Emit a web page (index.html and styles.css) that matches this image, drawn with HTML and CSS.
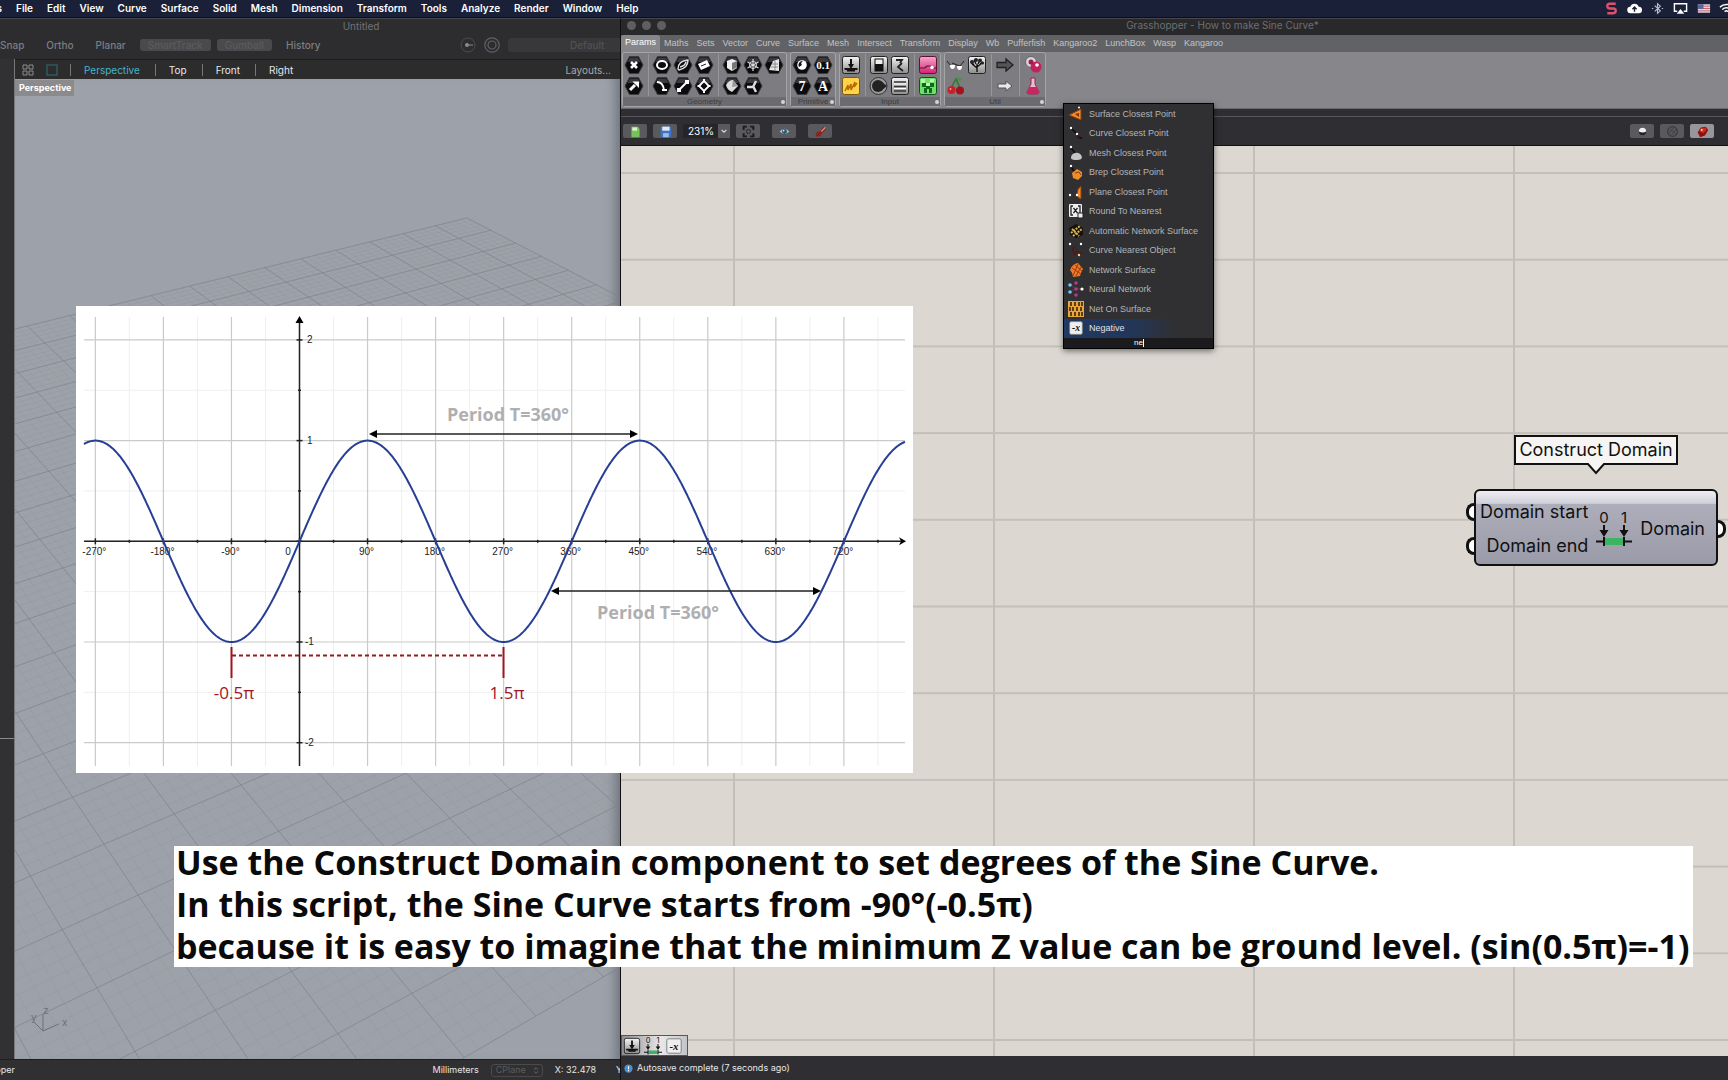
FILE: index.html
```html
<!DOCTYPE html>
<html lang="en">

<head>
    <meta charset="UTF-8">
    <meta name="viewport" content="width=device-width, initial-scale=1.0">
    <title>Grasshopper - How to make Sine Curve</title>
    <link rel="stylesheet" href="styles.css">
</head>

<body>
    <!-- shared shapes -->
    <svg class="defs" aria-hidden="true">
        <defs>
            <linearGradient id="steel" x1="0" y1="0" x2="0" y2="1">
                <stop offset="0" stop-color="#f4f4f4" />
                <stop offset="1" stop-color="#8c8c8c" />
            </linearGradient>
            <linearGradient id="pink" x1="0" y1="0" x2="0" y2="1">
                <stop offset="0" stop-color="#f7a9cb" />
                <stop offset="1" stop-color="#d81f72" />
            </linearGradient>
            <symbol id="hex" viewBox="0 0 20 20">
                <path d="M5.5 1.5h9L19 10l-4.500 8.500h-9L1 10z" fill="#0c0c0e" stroke="#3c3c40" />
                <path d="M6 2.500h8L16.500 7h-13z" fill="#3a3a3f" />
            </symbol>
            <symbol id="tile" viewBox="0 0 20 20">
                <rect x="1.500" y="1.500" width="17" height="17" rx="2" fill="url(#steel)" stroke="#222" />
            </symbol>
            <symbol id="slider" viewBox="0 0 20 20">
                <use href="#tile" />
                <path d="M10 4v7M3.500 14h13M6 15.500h8" stroke="#111" stroke-width="2" />
                <path d="M7 9h6l-3 5z" fill="#111" />
            </symbol>
            <symbol id="domain" viewBox="0 0 36 36">
                <rect x="9" y="27" width="18" height="7" fill="#3cb464" />
                <path d="M0 30.500h8M28 30.500h8M8 26v9M28 26v9M8 14v6M28 14v6" stroke="#111" stroke-width="2" />
                <path d="M3.500 19h9L8 26zM23.500 19h9L28 26z" fill="#111" />
                <text x="8" y="12" class="domain__digit">0</text>
                <text x="28" y="12" class="domain__digit">1</text>
            </symbol>
            <symbol id="negative" viewBox="0 0 20 20">
                <rect x="2" y="2" width="16" height="16" rx="2" fill="#eee" stroke="#777" />
                <text x="10" y="14" class="glyph glyph--minus-x">-x</text>
            </symbol>
        </defs>
    </svg>

    <header class="menubar">
        <nav class="menubar__menus">
            <span class="menubar__app">Rhinoceros</span>
            <a href="#">File</a><a href="#">Edit</a><a href="#">View</a><a href="#">Curve</a><a href="#">Surface</a><a href="#">Solid</a><a href="#">Mesh</a><a href="#">Dimension</a><a href="#">Transform</a><a href="#">Tools</a><a href="#">Analyze</a><a href="#">Render</a><a href="#">Window</a><a href="#">Help</a>
        </nav>
        <div class="menubar__extras">
            <svg viewBox="0 0 16 16"><path d="M12.500 3H6Q3.500 3 3.500 5.200T6 8h4q2.500 0 2.500 2.500T10 13H3.500" fill="none" stroke="#e0506a" stroke-width="2.600" /></svg>
            <svg viewBox="0 0 16 16"><path d="M4 13a3.500 3.500 0 0 1-.5-7A4.800 4.800 0 0 1 12.500 6a3.500 3.500 0 0 1 0 7z" fill="#fff" /><path d="M8 11.500V7M5.800 8.800L8 6.500l2.200 2.300" fill="none" stroke="#1a2037" stroke-width="1.500" /></svg>
            <svg viewBox="0 0 16 16"><path d="M5 5l6 5.500L8 13V3l3 2.500L5 11M2 8h1.500M12.500 8H14" fill="none" stroke="#b9bfd0" stroke-width="1.200" /></svg>
            <svg viewBox="0 0 16 16"><path d="M4.500 11H1.500V3h13v8h-3" fill="none" stroke="#fff" stroke-width="1.500" /><path d="M8 8.500l4 5H4z" fill="#fff" /></svg>
            <svg viewBox="0 0 16 16"><rect x="2" y="3.500" width="13" height="9" fill="#e9d4da" /><path d="M2 5.500h13M2 8h13M2 10.500h13" stroke="#c2606f" /><rect x="2" y="3.500" width="6" height="5" fill="#5a6798" /></svg>
            <svg viewBox="0 0 16 16"><path d="M1 6.500a10 10 0 0 1 14 0M3.500 9a6.500 6.500 0 0 1 9 0M6 11.300a3 3 0 0 1 4 0" fill="none" stroke="#fff" stroke-width="1.600" /></svg>
        </div>
    </header>

    <main class="desktop">
        <!-- Rhino window -->
        <section class="rhino">
            <div class="rhino__title">Untitled</div>
            <div class="rhino__tools">
                <button class="rhino__tool">Snap</button>
                <button class="rhino__tool">Ortho</button>
                <button class="rhino__tool">Planar</button>
                <button class="rhino__tool rhino__tool--on">SmartTrack</button>
                <button class="rhino__tool rhino__tool--on">Gumball</button>
                <button class="rhino__tool">History</button>
                <div class="rhino__layer">
                    <svg viewBox="0 0 16 16"><circle cx="8" cy="8" r="7" fill="none" stroke="#4c4c50" /><circle cx="7" cy="8" r="2" fill="#8a8a8e" /><path d="M8 8h5" stroke="#8a8a8e" /></svg>
                    <svg viewBox="0 0 16 16"><circle cx="8" cy="8" r="7.200" fill="none" stroke="#626266" stroke-width="1.200" /><circle cx="8" cy="8" r="4" fill="none" stroke="#626266" stroke-width="1.200" /></svg>
                    <select class="rhino__select" aria-label="Layer"><option>Default</option></select>
                </div>
            </div>
            <div class="rhino__body">
                <aside class="rhino__side"><div class="rhino__side-top"></div></aside>
                <div class="rhino__main">
                    <nav class="views">
                        <svg class="views__icon" viewBox="0 0 12 12"><path d="M1 1h4v4H1zM7 1h4v4H7zM1 7h4v4H1zM7 7h4v4H7z" fill="none" stroke="#8c8c90" /></svg>
                        <svg class="views__icon" viewBox="0 0 12 12"><rect x="1" y="1" width="10" height="10" fill="none" stroke="#2f6f7c" /></svg>
                        <a href="#" class="views__tab views__tab--active">Perspective</a>
                        <a href="#" class="views__tab">Top</a>
                        <a href="#" class="views__tab">Front</a>
                        <a href="#" class="views__tab">Right</a>
                        <a href="#" class="views__layouts">Layouts...</a>
                    </nav>
                    <div class="viewport">
                        <svg class="viewport__plane" id="plane"></svg>
                        <span class="viewport__name">Perspective</span>
                        <svg class="viewport__axes" viewBox="0 0 40 34">
                            <path d="M14 9v17l16-7M14 26L5 17" fill="none" stroke="#6c7078" />
                            <text x="14" y="9">z</text><text x="33" y="21">x</text><text x="2" y="16">y</text>
                        </svg>
                    </div>
                </div>
            </div>
            <footer class="rhino__status">
                <span class="rhino__clip">Grasshopper</span>
                <span class="rhino__units">Millimeters</span>
                <label class="rhino__cplane">
                    <select aria-label="Coordinates"><option>CPlane</option></select>
                    <svg viewBox="0 0 8 12"><path d="M2 5l2-2 2 2M2 7l2 2 2-2" fill="none" stroke="#6c6c70" /></svg>
                </label>
                <span>X: 32.478</span>
                <span class="rhino__y">Y</span>
            </footer>
        </section>

        <!-- Grasshopper window -->
        <section class="gh">
            <div class="gh__title">
                <div class="gh__lights"><i></i><i></i><i></i></div>
                Grasshopper - How to make Sine Curve*
            </div>
            <nav class="gh__tabs">
                <a href="#" class="gh__tab gh__tab--active">Params</a><a href="#" class="gh__tab">Maths</a><a href="#" class="gh__tab">Sets</a><a href="#" class="gh__tab">Vector</a><a href="#" class="gh__tab">Curve</a><a href="#" class="gh__tab">Surface</a><a href="#" class="gh__tab">Mesh</a><a href="#" class="gh__tab">Intersect</a><a href="#" class="gh__tab">Transform</a><a href="#" class="gh__tab">Display</a><a href="#" class="gh__tab">Wb</a><a href="#" class="gh__tab">Pufferfish</a><a href="#" class="gh__tab">Kangaroo2</a><a href="#" class="gh__tab">LunchBox</a><a href="#" class="gh__tab">Wasp</a><a href="#" class="gh__tab">Kangaroo</a>
            </nav>
            <div class="ribbon">
                <div class="ribbon__group">
                    <div class="ribbon__sets">
                        <div class="ribbon__set">
                            <button aria-label="Point"><svg viewBox="0 0 20 20"><use href="#hex" /><path d="M7 7l6 6M13 7l-6 6" stroke="#fff" stroke-width="2.600" /></svg></button>
                            <button aria-label="Vector"><svg viewBox="0 0 20 20"><use href="#hex" /><path d="M6 14l5-5" stroke="#fff" stroke-width="3" /><path d="M8.500 5.500H15v6.500z" fill="#fff" /></svg></button>
                        </div>
                        <div class="ribbon__set">
                            <button aria-label="Circle"><svg viewBox="0 0 20 20"><use href="#hex" /><ellipse cx="10" cy="10" rx="5" ry="4" fill="none" stroke="#fff" stroke-width="2" /></svg></button>
                            <button aria-label="Circular Arc"><svg viewBox="0 0 20 20"><use href="#hex" /><path d="M5 6q6 0 7 8M10 14h5" fill="none" stroke="#fff" stroke-width="1.800" /></svg></button>
                            <button aria-label="Curve"><svg viewBox="0 0 20 20"><use href="#hex" /><path d="M5 14q0-8 10-9 0 8-9 10zM7 12q5-1 6-5" fill="none" stroke="#ddd" stroke-width="1.400" /></svg></button>
                            <button aria-label="Line"><svg viewBox="0 0 20 20"><use href="#hex" /><path d="M6 14l8-8" stroke="#fff" stroke-width="2" /><path d="M4 12h4v4H4zM12 4h4v4h-4z" fill="#fff" /></svg></button>
                            <button aria-label="Plane"><svg viewBox="0 0 20 20"><use href="#hex" /><path d="M4 9l9-4 3 6-9 4z" fill="#fff" /><path d="M7 11l5-2" stroke="#222" /></svg></button>
                            <button aria-label="Rectangle"><svg viewBox="0 0 20 20"><use href="#hex" /><path d="M5 10l5-5 5 5-5 5z" fill="none" stroke="#fff" stroke-width="1.800" /><path d="M10 3v3M10 14v3M3.500 10h3M13.500 10h3" stroke="#fff" stroke-width="2" /></svg></button>
                        </div>
                        <div class="ribbon__set">
                            <button aria-label="Box"><svg viewBox="0 0 20 20"><use href="#hex" /><path d="M5 6l5-2 5 2v7l-5 3-5-3z" fill="#eee" /><path d="M10 8v7l5-2.500V6z" fill="#777" /></svg></button>
                            <button aria-label="Brep"><svg viewBox="0 0 20 20"><use href="#hex" /><path d="M4 9q3-5 7-5l5 6-6 6q-5-2-6-7z" fill="#ddd" /><path d="M11 4l5 6-6 1z" fill="#999" /></svg></button>
                            <button aria-label="Mesh"><svg viewBox="0 0 20 20"><use href="#hex" /><path d="M10 4v12M4.500 7l11 6M4.500 13l11-6" stroke="#ddd" stroke-width="1.200" /><circle cx="10" cy="10" r="3.500" fill="none" stroke="#ddd" /></svg></button>
                            <button aria-label="Geometry"><svg viewBox="0 0 20 20"><use href="#hex" /><path d="M4 11h6l3-6M10 10l3 6" fill="none" stroke="#ddd" stroke-width="2.400" /></svg></button>
                            <button aria-label="Surface"><svg viewBox="0 0 20 20"><use href="#hex" /><path d="M5 15l4-9 6-2v12z" fill="#e6e6e6" /><path d="M11 6v9M8 9h6M7 12h7" stroke="#777" stroke-width=".8" /></svg></button>
                        </div>
                    </div>
                    <div class="ribbon__label">Geometry</div>
                </div>
                <div class="ribbon__group">
                    <div class="ribbon__sets">
                        <div class="ribbon__set">
                            <button aria-label="Boolean"><svg viewBox="0 0 20 20"><use href="#hex" /><circle cx="10" cy="10" r="4.800" fill="#fff" /><path d="M7 12a4 4 0 0 1 4-6q-3 2-1 4z" fill="#111" /></svg></button>
                            <button aria-label="Integer"><svg viewBox="0 0 20 20"><use href="#hex" /><text x="10" y="15" class="glyph">7</text></svg></button>
                            <button aria-label="Number"><svg viewBox="0 0 20 20"><use href="#hex" /><text x="10" y="14" class="glyph glyph--small">0.1</text></svg></button>
                            <button aria-label="Text"><svg viewBox="0 0 20 20"><use href="#hex" /><text x="10" y="15" class="glyph">A</text></svg></button>
                        </div>
                    </div>
                    <div class="ribbon__label">Primitive</div>
                </div>
                <div class="ribbon__group">
                    <div class="ribbon__sets">
                        <div class="ribbon__set">
                            <button aria-label="Number Slider"><svg viewBox="0 0 20 20"><use href="#slider" /></svg></button>
                            <button aria-label="Panel"><svg viewBox="0 0 20 20"><rect x="1.500" y="1.500" width="17" height="17" rx="2" fill="#ffd24a" stroke="#7a5a10" /><path d="M4 15l3-6v5l3-6v6l4-8-1 5 3-4" fill="none" stroke="#b56a00" stroke-width="1.500" /></svg></button>
                        </div>
                        <div class="ribbon__set">
                            <button aria-label="Boolean Toggle"><svg viewBox="0 0 20 20"><use href="#tile" /><rect x="6" y="4" width="8" height="12" fill="#eee" stroke="#111" /><path d="M6 9h8v7H6z" fill="#111" /></svg></button>
                            <button aria-label="Control Knob"><svg viewBox="0 0 20 20"><circle cx="9.500" cy="10" r="8.500" fill="#999" stroke="#333" /><circle cx="9" cy="10" r="6" fill="#222" /><path d="M13 6l5 4-5 4z" fill="#222" /></svg></button>
                            <button aria-label="Graph Mapper"><svg viewBox="0 0 20 20"><use href="#tile" /><path d="M6 5h6l-2 3M12 8l-4 4 5 4" fill="none" stroke="#222" stroke-width="1.800" /></svg></button>
                            <button aria-label="Value List"><svg viewBox="0 0 20 20"><use href="#tile" /><path d="M4 6h12M4 10.500h12M4 15h12" stroke="#333" stroke-width="1.400" /><path d="M4 8h12M4 12.500h12" stroke="#fff" /></svg></button>
                        </div>
                        <div class="ribbon__set">
                            <button aria-label="Gradient"><svg viewBox="0 0 20 20"><rect x="1.500" y="1.500" width="17" height="17" rx="2" fill="url(#pink)" stroke="#5c1234" /><path d="M2 13h5l2-2h3l2 2h4" fill="none" stroke="#5c1234" stroke-width="1.200" /><circle cx="14" cy="12.500" r="1.800" fill="#fff" /></svg></button>
                            <button aria-label="Image Sampler"><svg viewBox="0 0 20 20"><rect x="1.500" y="1.500" width="17" height="17" rx="2" fill="#6fe06a" stroke="#15501a" /><path d="M3 3h4v4H3zM12 3h4v3h-4zM8 7h4v4H8z" fill="#b8f5a8" /><path d="M4 7h4v4H4zM12 7h4v4h-4zM8 10h4v3H8zM6 12h3v5H6zM11 12h3v5h-3z" fill="#0f6a1c" /></svg></button>
                        </div>
                    </div>
                    <div class="ribbon__label">Input</div>
                </div>
                <div class="ribbon__group">
                    <div class="ribbon__sets">
                        <div class="ribbon__set">
                            <button aria-label="Fitness"><svg viewBox="0 0 20 20"><path d="M1 6l4 5M6 8l8 3M14 11l4-5" stroke="#222" fill="none" /><path d="M4 10h5q0 4-2.500 4T4 10zM11 11h5q0 4-2.500 4T11 11z" fill="#fff" /></svg></button>
                            <button aria-label="Cherry Picker"><svg viewBox="0 0 20 20"><path d="M5 12L10 3l4 9" fill="none" stroke="#2d7a2d" stroke-width="1.500" /><path d="M10 3q4-3 6 1-3 2-6-1z" fill="#3f9a3c" /><circle cx="5.500" cy="14" r="4" fill="#c3222a" /><circle cx="14" cy="14.500" r="4" fill="#a5121d" /><circle cx="4.500" cy="13" r="1" fill="#ff9a94" /></svg></button>
                            <button aria-label="Param Viewer"><svg viewBox="0 0 20 20"><use href="#tile" /><path d="M10 17V9M10 13L5 9M10 12l5-4M4 7l3 3M16 7l-3 2M7 5l2 4M13 5l-2 4" stroke="#111" stroke-width="1.400" /><circle cx="5" cy="7" r="2" fill="#222" /><circle cx="9" cy="5" r="2" fill="#222" /><circle cx="13" cy="5.500" r="2" fill="#222" /><circle cx="15.500" cy="8" r="1.600" fill="#222" /></svg></button>
                        </div>
                        <div class="ribbon__set">
                            <button aria-label="Data Input"><svg viewBox="0 0 20 20"><path d="M2 7.500h9V4l7 6-7 6v-3.500H2z" fill="#555" stroke="#222" stroke-width="1.300" /></svg></button>
                            <button aria-label="Data Output"><svg viewBox="0 0 20 20"><path d="M3 8h8V5l6 5-6 5v-3H3z" fill="#e8e8e8" stroke="#555" /></svg></button>
                        </div>
                        <div class="ribbon__set">
                            <button aria-label="Cluster"><svg viewBox="0 0 20 20"><circle cx="8" cy="7" r="5.500" fill="#d9d3d6" stroke="#666" /><circle cx="13" cy="12" r="5.500" fill="#c2205f" /><circle cx="8" cy="7" r="2.500" fill="#a01c4c" /><circle cx="14" cy="10" r="1.800" fill="#fff" /></svg></button>
                            <button aria-label="Galapagos"><svg viewBox="0 0 20 20"><path d="M8 2h4v6l4 8q0 2-2 2H6q-2 0-2-2l4-8z" fill="#f2b9cd" stroke="#8e2a50" /><path d="M7 11h6l3 5q0 2-2 2H6q-2 0-2-2z" fill="#cc2361" /></svg></button>
                        </div>
                    </div>
                    <div class="ribbon__label">Util</div>
                </div>
            </div>
            <div class="gh__bar">
                <button class="gh__btn" aria-label="New"><svg viewBox="0 0 16 16"><path d="M3 2h8l2 3v10H3z" fill="#77c25a" /><path d="M4 3h6v4H4z" fill="#d9f2c8" /></svg></button>
                <button class="gh__btn" aria-label="Save"><svg viewBox="0 0 16 16"><rect x="2" y="2" width="13" height="13" rx="1" fill="#3f74c4" /><path d="M4 2h9v5H4z" fill="#dfe9f6" /><path d="M5 10h7v5H5z" fill="#9dbde8" /></svg></button>
                <label class="gh__zoom"><select aria-label="Zoom"><option>231%</option></select><svg viewBox="0 0 10 10"><path d="M3 4l2 2 2-2" fill="none" stroke="#ddd" /></svg></label>
                <button class="gh__btn" aria-label="Zoom extents"><svg viewBox="0 0 16 16"><path d="M2 6V2h4M10 2h4v4M14 10v4h-4M6 14H2v-4" fill="none" stroke="#1b1b1d" stroke-width="2.400" /><circle cx="8" cy="8" r="2.500" fill="none" stroke="#1b1b1d" /></svg></button>
                <button class="gh__btn gh__btn--apart" aria-label="Named views"><svg viewBox="0 0 16 16"><path d="M2 8q6-7 12 0-6 6-12 0z" fill="#a9c4cf" /><circle cx="8" cy="8" r="3" fill="#1f5a76" /><circle cx="7" cy="7" r="1" fill="#fff" /></svg></button>
                <button class="gh__btn gh__btn--apart" aria-label="Sketch"><svg viewBox="0 0 16 16"><path d="M2 14q0-7 5-6l5-6 3 3-6 6q0 4-7 3z" fill="#8e2222" /><path d="M9 8l5-5" stroke="#e09a90" stroke-width="1.500" /></svg></button>
                <div class="gh__preview">
                    <button class="gh__btn" aria-label="No preview"><svg viewBox="0 0 16 16"><circle cx="8" cy="8" r="4.500" fill="#222" /><path d="M3.500 8a4.500 4.500 0 0 1 9 0q-4 2.500-9 0z" fill="#eee" /></svg></button>
                    <button class="gh__btn" aria-label="Wireframe preview"><svg viewBox="0 0 16 16"><circle cx="8" cy="8" r="6" fill="none" stroke="#3a3a3c" stroke-width="1.400" /><path d="M3 11l7-8M6 13l7-8M5 5l7 6" stroke="#3a3a3c" /></svg></button>
                    <button class="gh__btn gh__btn--on" aria-label="Shaded preview"><svg viewBox="0 0 16 16"><path d="M2 9l4-6 6-1 3 4-4 7-6 2z" fill="#8e0f0c" /><path d="M4 8l3-4 5-1 1 3-4 4z" fill="#cf2a1e" /><circle cx="7" cy="6" r="1.300" fill="#ffc7bb" /></svg></button>
                </div>
            </div>
            <div class="canvas">
                <svg class="canvas__grid" aria-hidden="true">
                    <pattern id="cells" x="112" y="26" width="260" height="86.700" patternUnits="userSpaceOnUse">
                        <path d="M1 0v87M0 1h260" stroke="#c4bfb9" stroke-width="2" fill="none" />
                    </pattern>
                    <rect width="100%" height="100%" fill="url(#cells)" />
                </svg>
                <div class="node">
                    <div class="node__tag">Construct Domain
                        <svg viewBox="0 0 18 12"><path d="M0 0h18L9 10z" fill="#f6f5f3" /><path d="M0 1h1l8 9 8-9h1" fill="none" stroke="#111" stroke-width="2" /></svg>
                    </div>
                    <div class="node__box">
                        <div class="node__inputs"><span>Domain start</span><span>Domain end</span></div>
                        <svg class="node__icon" viewBox="0 0 36 36"><use href="#domain" /></svg>
                        <div class="node__output">Domain</div>
                    </div>
                </div>
                <div class="recent">
                    <svg viewBox="0 0 20 20"><use href="#slider" /></svg>
                    <svg viewBox="0 0 36 36"><use href="#domain" /></svg>
                    <svg viewBox="0 0 20 20"><use href="#negative" /></svg>
                </div>
            </div>
            <footer class="gh__status">
                <svg viewBox="0 0 12 12"><circle cx="6" cy="6" r="5.500" fill="#4a90d0" /><path d="M6 3v4M6 8v1.500" stroke="#fff" stroke-width="1.500" /></svg>
                Autosave complete (7 seconds ago)
            </footer>
        </section>

        <div class="search">
            <ul class="search__list">
                <li><svg viewBox="0 0 16 16"><path d="M1 9l12-6v11z" fill="#f08a2c" stroke="#8a3c08" /><path d="M7 8l4-1v4z" fill="#7c3206" /><circle cx="11" cy="1.500" r="1" fill="#fff" /></svg>Surface Closest Point</li>
                <li><svg viewBox="0 0 16 16"><path d="M3 3l6 6q0 4 5 4" fill="none" stroke="#0c0c0c" stroke-width="1.500" /><circle cx="3" cy="3" r="1.200" fill="#fff" /><circle cx="9" cy="9" r="1.200" fill="#fff" /><circle cx="10" cy="12" r="1.500" fill="#4a1212" /></svg>Curve Closest Point</li>
                <li><svg viewBox="0 0 16 16"><path d="M3 3l4 5" stroke="#0c0c0c" stroke-width="1.500" /><circle cx="3" cy="2" r="1.200" fill="#fff" /><path d="M3 13q0-4 4-5 5-1 7 4 0 3-5 3-6 0-6-2z" fill="#c4c4c4" /></svg>Mesh Closest Point</li>
                <li><svg viewBox="0 0 16 16"><path d="M3 3l4 5" stroke="#0c0c0c" stroke-width="1.500" /><circle cx="3" cy="2" r="1.200" fill="#fff" /><path d="M4 9l5-4 5 3v4l-4 4-5-2z" fill="#ee8b2a" /><path d="M7 9l4-1 2 3" fill="none" stroke="#8a430a" /></svg>Brep Closest Point</li>
                <li><svg viewBox="0 0 16 16"><path d="M9 10q0-5 4-8v13q-4-1-4-5z" fill="#f08a2c" stroke="#8a3c08" /><circle cx="2" cy="11" r="1.200" fill="#fff" /><circle cx="9" cy="11" r="1.200" fill="#fff" /></svg>Plane Closest Point</li>
                <li><svg viewBox="0 0 16 16"><rect x="1" y="1" width="13" height="13" rx="1" fill="#eee" /><path d="M5 3H3v9h2M10 3h2v9h-2M5.500 5l4 5M9.500 5l-4 5" fill="none" stroke="#222" stroke-width="1.300" /><rect x="10" y="10" width="5" height="5" fill="#eee" stroke="#222" /></svg>Round To Nearest</li>
                <li><svg viewBox="0 0 16 16"><path d="M1 5l7-4 7 4v7l-7 3-6-3z" fill="#17130c" /><path d="M3 10l9-7M5 13l9-7M4 6l7 7" stroke="#d8b25c" stroke-width="2" stroke-dasharray="2 1" /></svg>Automatic Network Surface</li>
                <li><svg viewBox="0 0 16 16"><path d="M6 5q-3 4 2 8M8 9l5 3" fill="none" stroke="#5a1018" stroke-width="1.600" /><circle cx="2" cy="2" r="1.200" fill="#fff" /><circle cx="13" cy="2" r="1.200" fill="#fff" /><circle cx="11" cy="13" r="1.200" fill="#e8d890" /></svg>Curve Nearest Object</li>
                <li><svg viewBox="0 0 16 16"><path d="M2 8q2-6 8-7l5 6q-2 3-3 7l-7 1q0-4-3-7z" fill="#ee7a2a" /><path d="M4 6l9 6M7 3l7 6M10 2l-5 12M13 5l-5 9" stroke="#8e2c08" stroke-width=".8" /></svg>Network Surface</li>
                <li><svg viewBox="0 0 16 16"><path d="M3 4l4 3M3 11l4-3M9 8h4" stroke="#703050" /><circle cx="2" cy="4" r="1.800" fill="#6fc7f0" /><circle cx="2" cy="11" r="1.800" fill="#6fc7f0" /><circle cx="8" cy="2" r="1.800" fill="#b03a88" /><circle cx="8" cy="8" r="1.800" fill="#b03a88" /><circle cx="8" cy="14" r="1.800" fill="#b03a88" /><circle cx="14" cy="8" r="1.600" fill="#fff" /></svg>Neural Network</li>
                <li><svg viewBox="0 0 16 16"><rect width="16" height="16" fill="#e8a63c" /><path d="M3 1v4M7 1v4M11 1v4M14 1v4M2 6v4M5 6v4M9 6v4M13 6v4M3 11v4M7 11v4M11 11v4M14 11v4" stroke="#3c2404" stroke-width="1.600" /></svg>Net On Surface</li>
                <li class="search__item--active"><svg viewBox="0 0 20 20"><use href="#negative" /></svg>Negative</li>
            </ul>
            <div class="search__field">
                <input class="search__input" type="text" value="ne" aria-label="Search components">
            </div>
        </div>

        <figure class="chart">
            <svg id="chart" viewBox="0 0 837 467" role="img" aria-label="Sine curve"></svg>
        </figure>

        <div class="caption">
            <p class="caption__text">
                Use the Construct Domain component to set degrees of the Sine Curve.<br>
                In this script, the Sine Curve starts from -90°(-0.5π)<br>
                because it is easy to imagine that the minimum Z value can be ground level. (sin(0.5π)=-1)
            </p>
        </div>
    </main>

    <script src="script.js"></script>
</body>

</html>
```
FILE: styles.css
```css
*,
*::after,
*::before {
    padding: 0;
    margin: 0;
    box-sizing: border-box;
}

html,
body {
    height: 100%;
}

body {
    display: flex;
    flex-direction: column;
    overflow: hidden;
    background: #2e2e31;
    color: #e6e6e8;
    font: 10px/12px Inter, "Liberation Sans", sans-serif;
}

a {
    color: inherit;
    text-decoration: none;
}

button,
select,
input {
    border: 0;
    background: none;
    color: inherit;
    font: inherit;
    appearance: none;
}

svg {
    display: block;
}

.defs {
    position: absolute;
    width: 0;
    height: 0;
}

.glyph {
    font: bold 14px "Liberation Serif", serif;
    fill: #fff;
    text-anchor: middle;
}

.glyph--small {
    font-size: 11px;
}

.glyph--minus-x {
    font-size: 12px;
    font-style: italic;
    fill: #111;
}

.domain__digit {
    font: 15px Inter, sans-serif;
    text-anchor: middle;
    fill: #111;
}

/* menu bar */

.menubar {
    flex: none;
    display: flex;
    justify-content: space-between;
    height: 18px;
    padding-bottom: 1px;
    overflow: hidden;
    background: #1a2038;
    border-bottom: 1px solid #0d0f18;
    color: #fff;
}

.menubar__menus {
    display: flex;
    align-items: center;
    gap: 14px;
    font-weight: 600;
}

.menubar__app {
    display: flex;
    justify-content: flex-end;
    width: 2px;
    overflow: hidden;
}

.menubar__extras {
    display: flex;
    align-items: center;
    gap: 8px;
    margin-right: -6px;
}

.menubar__extras svg {
    width: 15px;
    height: 15px;
}

.desktop {
    position: relative;
    flex: 1;
    min-height: 0;
    display: grid;
    grid-template-columns: 620fr 1108fr;
}

/* Rhino */

.rhino {
    display: flex;
    flex-direction: column;
    min-width: 0;
    overflow: hidden;
    background: #2d2d30;
    border-top: 1px solid #47474b;
}

.rhino__title {
    padding: 1px 0 0 102px;
    color: #727276;
    text-align: center;
}

.rhino__tools {
    display: flex;
    align-items: center;
    height: 27px;
    gap: 22px;
    padding-bottom: 2px;
    color: #7e7e82;
    font-weight: 500;
}

.rhino__tool--on {
    margin: 0 -8px;
    padding: 0 8px;
    border-radius: 3px;
    background: #4a4a4d;
    color: #5a5a5e;
}

.rhino__layer {
    display: flex;
    align-items: center;
    gap: 8px;
    margin-left: auto;
}

.rhino__layer svg {
    width: 16px;
    height: 16px;
}

.rhino__select {
    width: 112px;
    height: 14px;
    padding-left: 62px;
    border-radius: 3px 0 0 3px;
    background: #38383b;
    color: #505054;
}

.rhino__body {
    flex: 1;
    min-height: 0;
    display: flex;
}

.rhino__side {
    display: flex;
    flex-direction: column;
    width: 15px;
    border-right: 1px solid #77777b;
    background: #313134;
}

.rhino__side-top {
    height: 68%;
    border-bottom: 1px solid #8a8a8e;
}

.rhino__main {
    flex: 1;
    min-width: 0;
    display: flex;
    flex-direction: column;
}

.views {
    display: flex;
    align-items: center;
    height: 20px;
    padding: 0 9px 0 7px;
    gap: 12px;
    background: #2c2c2c;
    border-top: 1px solid #1c1c1e;
}

.views__icon {
    width: 12px;
    height: 12px;
}

.views__tab {
    padding-left: 13px;
    border-left: 1px solid #77777b;
    margin-right: 3px;
}

.views__tab--active {
    color: #45b4cc;
}

.views__layouts {
    margin-left: auto;
    color: #a8a8ac;
}

.viewport {
    position: relative;
    flex: 1;
    overflow: hidden;
    background: #9da2aa;
    box-shadow: inset -12px 0 12px -8px #6c7078;
}

.viewport__plane {
    position: absolute;
    width: 100%;
    height: 100%;
}

.plane__minor {
    stroke: #858a93;
    stroke-opacity: .2;
    fill: none;
}

.plane__major {
    stroke: #7d828b;
    stroke-opacity: .6;
    fill: none;
}

.viewport__name {
    position: absolute;
    top: 1px;
    padding: 2px 3px 2px 4px;
    background: #8b8b8e;
    color: #fff;
    font: bold 9px/12px Inter, sans-serif;
}

.viewport__axes {
    position: absolute;
    left: 14px;
    bottom: 20px;
    width: 40px;
    height: 34px;
}

.viewport__axes text {
    font-size: 10px;
    fill: #6c7078;
}

.rhino__status {
    display: flex;
    align-items: center;
    height: 21px;
    gap: 12px;
    background: #303032;
    border-top: 1px solid #1d1d1f;
    font-size: 9px;
    white-space: nowrap;
}

.rhino__clip {
    display: flex;
    justify-content: flex-end;
    width: 15px;
    overflow: hidden;
}

.rhino__units {
    margin-left: auto;
}

.rhino__cplane {
    display: flex;
    align-items: center;
    width: 52px;
    height: 13px;
    padding: 0 2px 0 4px;
    border: 1px solid #4a4a4d;
    border-radius: 3px;
    color: #5c5c60;
}

.rhino__cplane select {
    flex: 1;
    min-width: 0;
}

.rhino__cplane svg {
    width: 8px;
    height: 11px;
}

.rhino__y {
    width: 4px;
    margin-left: 8px;
    overflow: hidden;
}

/* Grasshopper */

.gh {
    display: flex;
    flex-direction: column;
    min-width: 0;
    background: #2f2f33;
    border-left: 1px solid #101012;
    border-top: 1px solid #47474b;
}

.gh__title {
    position: relative;
    height: 16px;
    padding-left: 96px;
    background: #29292b;
    color: #6e6e72;
    text-align: center;
}

.gh__lights {
    position: absolute;
    left: 6px;
    top: 2px;
    display: flex;
    gap: 6px;
}

.gh__lights i {
    width: 9px;
    height: 9px;
    border-radius: 50%;
    background: #5f5f62;
}

.gh__tabs {
    display: flex;
    height: 17px;
    background: #616266;
    color: #c2c2c4;
    font: 9px/17px "Liberation Sans", Arial, sans-serif;
}

.gh__tab {
    padding: 0 4px;
}

.gh__tab--active {
    border-radius: 3px 3px 0 0;
    background: #87868a;
    color: #fff;
    line-height: 15px;
}

.ribbon {
    display: flex;
    gap: 3px;
    height: 57px;
    padding: 0 0 1px 1px;
    background: #87868a;
    border-bottom: 1px solid #6a6a6e;
}

.ribbon__group {
    display: flex;
    flex-direction: column;
    border: 1px solid #a5a5a8;
    border-radius: 3px;
    background: #7d7c81;
}

.ribbon__sets {
    display: flex;
    padding: 1px;
}

.ribbon__set {
    display: grid;
    grid-auto-flow: column;
    grid-template-rows: 21px 21px;
    grid-auto-columns: 21px;
}

.ribbon__set + .ribbon__set {
    margin-left: 3px;
    padding-left: 3px;
    border-left: 1px solid #97979b;
}

.ribbon__set svg {
    width: 20px;
    height: 20px;
}

.ribbon__label {
    position: relative;
    flex: 1;
    background: #6c6b70;
    color: #3c3c40;
    font: 8px/9px "Liberation Sans", Arial, sans-serif;
    text-align: center;
}

.ribbon__label::after {
    content: "";
    position: absolute;
    right: 1px;
    top: 3px;
    width: 4px;
    height: 4px;
    border-radius: 50%;
    background: #d4d4d6;
}

.gh__bar {
    display: flex;
    align-items: center;
    gap: 6px;
    height: 30px;
    margin-top: 7px;
    padding: 0 14px 0 2px;
    border-top: 1px solid #55555a;
    border-bottom: 1px solid #111;
}

.gh__btn {
    display: flex;
    align-items: center;
    justify-content: center;
    width: 24px;
    height: 14px;
    border-radius: 2px;
    background: #5a5a5e;
}

.gh__btn svg {
    width: 13px;
    height: 13px;
}

.gh__btn--apart {
    margin-left: 6px;
}

.gh__btn--on {
    background: #97979b;
}

.gh__zoom {
    display: flex;
    width: 47px;
    height: 14px;
}

.gh__zoom select {
    width: 35px;
    padding-left: 5px;
    background: #262628;
    color: #fff;
}

.gh__zoom svg {
    width: 12px;
    height: 14px;
    background: #5a5a5e;
}

.gh__preview {
    display: flex;
    gap: 6px;
    margin-left: auto;
}

.canvas {
    position: relative;
    flex: 1;
    min-height: 0;
    overflow: hidden;
    background: #dcd7d1;
}

.canvas__grid {
    width: 100%;
    height: 100%;
}

.node {
    position: absolute;
    right: 10px;
    top: 289px;
    display: flex;
    flex-direction: column;
    align-items: center;
    color: #111;
    font: 18px/22px Inter, sans-serif;
}

.node__tag {
    position: relative;
    padding: 2px 3px;
    border: 2px solid #111;
    background: #f6f5f3;
}

.node__tag svg {
    position: absolute;
    left: calc(50% - 9px);
    top: 100%;
    width: 18px;
    height: 12px;
}

.node__box {
    position: relative;
    display: flex;
    align-items: center;
    gap: 8px;
    height: 77px;
    margin-top: 24px;
    padding: 2px 11px 0 4px;
    border: 2px solid #111;
    border-radius: 6px;
    background: linear-gradient(#eeeef2, #cfcfd8 17%, #aeaebb 18%, #9a9aa8);
}

.node__inputs {
    display: flex;
    flex-direction: column;
    gap: 12px;
    text-align: right;
}

.node__inputs span::before,
.node__output::after {
    content: "";
    position: absolute;
    left: -10px;
    width: 8px;
    height: 18px;
    margin-top: 2px;
    border: 3px solid #111;
    border-right: 0;
    border-radius: 9px 0 0 9px;
    background: #fff;
}

.node__output::after {
    left: auto;
    right: -10px;
    border: 3px solid #111;
    border-left: 0;
    border-radius: 0 9px 9px 0;
}

.node__icon {
    width: 36px;
    height: 36px;
}

.recent {
    position: absolute;
    left: 0;
    bottom: 0;
    display: flex;
    align-items: center;
    gap: 3px;
    height: 21px;
    padding: 0 4px 0 1px;
    border: 1px solid #55555a;
    background: linear-gradient(90deg, #8e8e90, #e8e8ea 60%, #c4c4c6);
}

.recent svg {
    width: 18px;
    height: 18px;
}

.gh__status {
    display: flex;
    align-items: center;
    gap: 4px;
    height: 24px;
    padding-left: 3px;
    font-size: 9px;
}

.gh__status svg {
    width: 9px;
    height: 11px;
}

/* component search */

.search {
    position: absolute;
    left: 1063px;
    top: 85px;
    width: 151px;
    border: 1px solid #000;
    background: #303032;
    box-shadow: 0 2px 6px rgba(0, 0, 0, .5);
    font: 9px/12px "Liberation Sans", Arial, sans-serif;
}

.search__list {
    display: grid;
    grid-auto-rows: 1fr;
    height: 234px;
    color: #b4b4b6;
    list-style: none;
}

.search__list li {
    display: flex;
    align-items: center;
    gap: 5px;
    padding-left: 4px;
}

.search__list svg {
    width: 16px;
    height: 16px;
}

.search__item--active {
    background: linear-gradient(90deg, #1f3a63, #22365a 45%, #303032 75%);
    color: #e2e2e4;
}

.search__field {
    position: relative;
    background: #1b1b1d;
}

/* text caret */
.search__field::after {
    content: "";
    position: absolute;
    left: calc(50% + 4px);
    top: 1px;
    width: 1px;
    height: 8px;
    background: #fff;
}

.search__input {
    display: block;
    width: 100%;
    height: 10px;
    color: #fff;
    font: 8px/10px "Liberation Sans", Arial, sans-serif;
    text-align: center;
}

/* sine chart */

.chart {
    position: absolute;
    left: 76px;
    top: 288px;
    width: 837px;
    background: #fff;
}

.chart__minor {
    stroke: #efefef;
}

.chart__major {
    stroke: #cacacc;
    stroke-width: 1.2;
}

.chart__axis {
    stroke: #222;
    stroke-width: 1.5;
    fill: none;
}

.chart__curve {
    stroke: #263f94;
    stroke-width: 2;
    fill: none;
}

.chart__tick {
    font: 10px "Liberation Sans", Arial, sans-serif;
    fill: #222;
}

.chart__tick--x {
    text-anchor: middle;
}

.chart__period {
    font: bold 18px "Open Sans", sans-serif;
    fill: #afafb1;
    text-anchor: middle;
}

.chart__mark {
    stroke: #a01525;
    stroke-width: 2;
}

.chart__mark--dashed {
    stroke-dasharray: 4 3;
}

.chart__pi {
    font: 17px "Open Sans", sans-serif;
    fill: #a01525;
    text-anchor: middle;
}

.caption {
    position: absolute;
    left: 174px;
    top: 828px;
    display: flow-root;
    padding: 0 4px 0 2px;
    background: #fff;
    color: #0a0a0a;
    font: bold 34px/42px "Open Sans", sans-serif;
    white-space: nowrap;
}

/* trims the leading above the first line */
.caption__text {
    margin-top: -5px;
}
```
FILE: script.js
```js
// ground plane of the perspective viewport, in homogeneous coordinates
const far = [452, 139];
const vanishA = [2968, -479];
const vanishB = [-745, -479];
const stepA = 0.0124;
const stepB = 0.0195;

function project(u, v) {
    const s = -stepA * u;
    const t = -stepB * v;
    const w = 1 + s + t;
    const x = (far[0] + s * vanishA[0] + t * vanishB[0]) / w;
    const y = (far[1] + s * vanishA[1] + t * vanishB[1]) / w;
    return x.toFixed(1) + ' ' + y.toFixed(1);
}

function planeLines(step) {
    let d = '';
    for (let v = 0; v <= 20.01; v += step) {
        d += 'M' + project(0, v) + 'L' + project(30, v);
    }
    for (let u = 0; u <= 30.01; u += step) {
        d += 'M' + project(u, 0) + 'L' + project(u, 20);
    }
    return d;
}

document.getElementById('plane').innerHTML =
    '<path class="plane__minor" d="' + planeLines(0.2) + '"/>' +
    '<path class="plane__major" d="' + planeLines(1) + '"/>';

// sine chart
const left = 8, right = 829, top_ = 11, bottom = 460;
const ox = 223.5, oy = 235.3;
const quarter = 68.05, unit = 100.7;
let out = '';

function line(cls, x1, y1, x2, y2) {
    out += `<line class="${cls}" x1="${x1}" y1="${y1}" x2="${x2}" y2="${y2}"/>`;
}

function text(cls, x, y, value) {
    out += `<text class="${cls}" x="${x}" y="${y}">${value}</text>`;
}

for (let i = -5; i <= 17; i += 2) {
    line('chart__minor', ox + i * quarter / 2, top_, ox + i * quarter / 2, bottom);
}
for (let i = -3; i <= 3; i += 2) {
    line('chart__minor', left, oy + i * unit / 2, right, oy + i * unit / 2);
}
for (let i = -3; i <= 8; i++) {
    line('chart__major', ox + i * quarter, top_, ox + i * quarter, bottom);
}
for (let i = -2; i <= 2; i++) {
    line('chart__major', left, oy + i * unit, right, oy + i * unit);
}

// axes with ticks
line('chart__axis', left, oy, right - 4, oy);
line('chart__axis', ox, top_ + 4, ox, bottom);
out += `<path d="M${ox - 4} ${top_ + 6}l4 -7 4 7z"/><path d="M${right - 6} ${oy - 4}l7 4 -7 4 2 -4z"/>`;
for (let i = -6; i <= 17; i++) {
    const h = i % 2 ? 1.5 : 3;
    line('chart__axis', ox + i * quarter / 2, oy - h, ox + i * quarter / 2, oy + h);
}
for (let i = -4; i <= 4; i++) {
    const w = i % 2 ? 1.5 : 3;
    line('chart__axis', ox - w, oy + i * unit / 2, ox + w, oy + i * unit / 2);
}
for (let i = -3; i <= 8; i++) {
    if (i !== 0) {
        text('chart__tick chart__tick--x', ox + i * quarter - 1, 249, i * 90 + '°');
    }
}
text('chart__tick chart__tick--x', 212, 249, '0');
[2, 1, -1, -2].forEach(n => text('chart__tick', n > 0 ? 231 : 229, oy - n * unit + 3, n));

let curve = '';
for (let x = left; x <= right; x += 1) {
    const y = oy - Math.sin((x - ox) / quarter * Math.PI / 2) * unit;
    curve += (curve ? 'L' : 'M') + x + ' ' + y.toFixed(2);
}
out += `<path class="chart__curve" d="${curve}"/>`;

// periods
function period(x1, x2, y) {
    line('chart__axis', x1 + 5, y, x2 - 5, y);
    out += `<path d="M${x1} ${y}l8 -4v8zM${x2} ${y}l-8 -4v8z"/>`;
}
period(293, 562, 128);
period(475, 745, 285);
text('chart__period', 432, 115, 'Period T=360°');
text('chart__period', 582, 313, 'Period T=360°');

line('chart__mark', 155.5, 341, 155.5, 372);
line('chart__mark', 427.5, 341, 427.5, 372);
line('chart__mark chart__mark--dashed', 156, 349.5, 427, 349.5);
text('chart__pi', 158, 393, '-0.5π');
text('chart__pi', 431, 393, '1.5π');

document.getElementById('chart').innerHTML = out;
```
